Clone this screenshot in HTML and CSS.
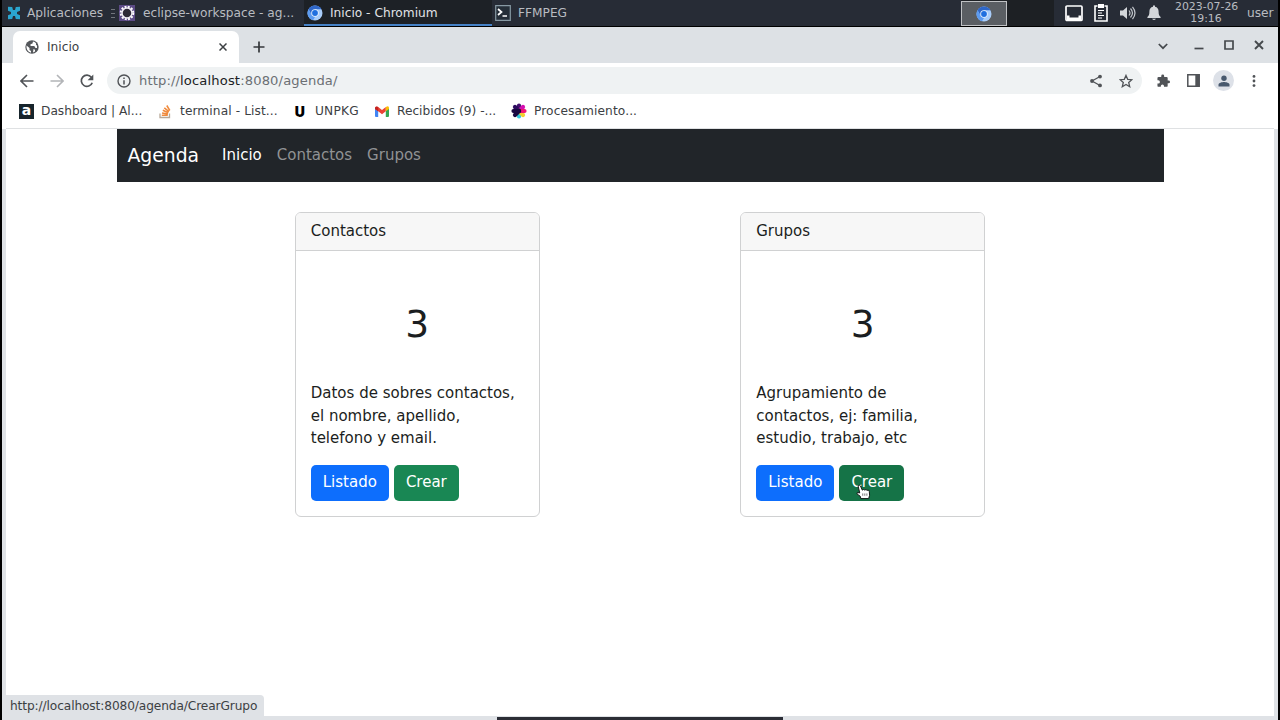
FILE: index.html
```html
<!DOCTYPE html>
<html lang="es">
<head>
    <meta charset="UTF-8">
    <title>Inicio</title>
    <link rel="stylesheet" href="styles.css">
</head>
<body>
    <div class="panel">
        <div class="task task-menu">
            <svg width="14" height="14" viewBox="0 0 14 14" fill="#2aa5cf"><path d="M1 .8l4.200.2L6 4h2l.8-3L13 .8v4L10 6v2l3 1.200v4l-4.200-.2L8 10H6l-.8 3-4.200.2v-4L4 8V6L1 4.800z"/><path d="M0 6h4v2H0zM10 6h4v2h-4z" fill="#272c36"/></svg>
            <span>Aplicaciones</span>
        </div>
        <div class="handle"></div>
        <div class="task task-eclipse">
            <svg width="16" height="16" viewBox="0 0 16 16"><path fill="#5c4b86" d="M0 0h16v16H0z"/><circle cx="8" cy="8" r="6.300" fill="none" stroke="#fff" stroke-width="2" stroke-dasharray="2 1.300"/><circle cx="8" cy="8" r="5" fill="#2d2a36" stroke="#f1edf5" stroke-width="1.500"/></svg>
            <span>eclipse-workspace - ag...</span>
        </div>
        <div class="task task-chromium active">
            <svg width="16" height="16" viewBox="0 0 16 16"><circle cx="8" cy="8" r="7.500" fill="#a9cdfa"/><path d="M1.500 4.300A7.500 7.500 0 0 1 14.500 4.300H8L4.700 10z" fill="#2f67c8"/><path d="M1.500 4.300L5 10.500 8 12l-2 3.300A7.500 7.500 0 0 1 1.500 4.300z" fill="#5c9bf0"/><circle cx="8" cy="8" r="3.800" fill="#e3effd"/><circle cx="8" cy="8" r="2.900" fill="#1f6fdf"/></svg>
            <span>Inicio - Chromium</span>
        </div>
        <div class="task task-term">
            <svg width="16" height="16" viewBox="0 0 16 16"><path d="M.7.7h14.600v14.600H.7z" fill="#252e38" stroke="#8799a3" stroke-width="1.200"/><path d="M3 4l3.500 3L3 10M7.500 11H12" fill="none" stroke="#fff" stroke-width="1.700"/></svg>
            <span>FFMPEG</span>
        </div>
        <div class="pager">
            <div class="desk">
                <svg width="16" height="16" viewBox="0 0 16 16"><circle cx="8" cy="8" r="7.500" fill="#a9cdfa"/><path d="M1.500 4.300A7.500 7.500 0 0 1 14.500 4.300H8L4.700 10z" fill="#2f67c8"/><path d="M1.500 4.300L5 10.500 8 12l-2 3.300A7.500 7.500 0 0 1 1.500 4.300z" fill="#5c9bf0"/><circle cx="8" cy="8" r="3.800" fill="#e3effd"/><circle cx="8" cy="8" r="2.900" fill="#1f6fdf"/></svg>
            </div>
        </div>
        <div class="tray">
            <svg width="18" height="17" viewBox="0 0 18 17"><rect x="1" y="1" width="16" height="14.500" rx="1" fill="none" stroke="#fff" stroke-width="1.700"/><path d="M2 10.500h2.500v2h9v-2H16V15H2z" fill="#fff"/></svg>
            <svg width="14" height="18" viewBox="0 0 14 18"><path d="M3.500 2H1v15h12V2h-2.500" fill="none" stroke="#fff" stroke-width="1.600"/><path d="M4 0h6v4H4z" fill="#fff"/><path d="M4 6.500h6M4 9h4M4 11.500h6M4 14h4" stroke="#fff" stroke-width="1.200"/></svg>
            <svg width="17" height="14" viewBox="0 0 17 14"><path d="M1 4.500h3L8 1v12L4 9.500H1z" fill="#d3d6da"/><path d="M10 4.500q2 2.500 0 5M11.500 2.500q4 4.500 0 9M13.500.8q5 6.200 0 12.400" fill="none" stroke="#c3c7cc" stroke-width="1.200"/></svg>
            <svg width="14" height="16" viewBox="0 0 14 16" fill="#d3d6da"><path d="M6 .5h2v1.200c2.500.5 3.600 2.300 3.600 4.800 0 3 .5 4.300 2 5.500v1H.4v-1c1.500-1.200 2-2.500 2-5.500 0-2.500 1.100-4.300 3.600-4.800zM5 13.800h4q-2 2.600-4 0z"/></svg>
        </div>
        <div class="clock">2023-07-26<br>19:16</div>
        <div class="user">user</div>
    </div>

    <div class="window">
        <div class="tabstrip">
            <div class="tab">
                <svg class="globe" width="14" height="14" viewBox="0 0 14 14"><circle cx="7" cy="7" r="6.700" fill="#54575b"/><path d="M1.500 5.500l3 2.500v2l1.500 1v1.800Q1 11.500 1.500 5.500zM8 1.500l-.5 2-2 .8v1.800h3.800L10.500 8H12V5.500l-1-.6V3.200q-1.300-1.400-3-1.700zM8.500 9l1.500.8v1.700l-2 1z" fill="#fff"/></svg>
                <span>Inicio</span>
                <svg class="close" width="8" height="8" viewBox="0 0 8 8"><path d="M.5.5l7 7M7.500.5l-7 7" stroke="#3c4043" stroke-width="1.500"/></svg>
            </div>
            <svg class="newtab" width="12" height="12" viewBox="0 0 12 12"><path d="M6 .5v11M.5 6h11" stroke="#34373b" stroke-width="1.700"/></svg>
            <div class="controls">
                <svg width="10" height="8" viewBox="0 0 10 8"><path d="M.8 2L5 6.200 9.200 2" fill="none" stroke="#45494d" stroke-width="1.700"/></svg>
                <svg width="10" height="10" viewBox="0 0 10 10"><path d="M.5 8.500h9" stroke="#45494d" stroke-width="1.700"/></svg>
                <svg width="10" height="10" viewBox="0 0 10 10"><path d="M1 1h8v8H1z" fill="none" stroke="#45494d" stroke-width="1.700"/></svg>
                <svg width="10" height="10" viewBox="0 0 10 10"><path d="M1 1l8 8M9 1L1 9" stroke="#45494d" stroke-width="1.900"/></svg>
            </div>
        </div>

        <div class="toolbar">
            <svg width="14" height="14" viewBox="0 0 14 14" fill="none" stroke="#505357" stroke-width="1.600"><path d="M13.500 7H1.300M7 1L1 7l6 6"/></svg>
            <svg width="14" height="14" viewBox="0 0 14 14" fill="none" stroke="#b3b5b8" stroke-width="1.600"><path d="M.5 7h12.200M7 1l6 6-6 6"/></svg>
            <svg width="14" height="14" viewBox="0 0 14 14"><path d="M12.200 8.700A5.600 5.600 0 1 1 11.300 3.300L12 4" fill="none" stroke="#505357" stroke-width="1.700"/><path d="M13.300.5v5.700H7.600z" fill="#505357"/></svg>
            <div class="address">
                <svg width="14" height="14" viewBox="0 0 14 14"><circle cx="7" cy="7" r="6" fill="none" stroke="#505357" stroke-width="1.400"/><path d="M7 6.200v4.300M7 3.400v1.500" stroke="#505357" stroke-width="1.500"/></svg>
                <div class="url">http://<b>localhost</b>:8080/agenda/</div>
                <svg width="14" height="14" viewBox="0 0 14 14" fill="#505357"><path d="M11 2.500L3 7l8 4.500" fill="none" stroke="#505357" stroke-width="1.300"/><circle cx="11" cy="2.600" r="1.900"/><circle cx="3" cy="7" r="1.900"/><circle cx="11" cy="11.400" r="1.900"/></svg>
                <svg width="14" height="14" viewBox="0 0 14 14"><path d="M7 1.400l1.700 3.900 4.200.4-3.200 2.800 1 4.200L7 10.500l-3.700 2.200 1-4.200L1.100 5.700l4.200-.4z" fill="none" stroke="#505357" stroke-width="1.300"/></svg>
            </div>
            <div class="actions">
                <svg width="14" height="14" viewBox="0 0 24 24" fill="#505357"><path d="M21.500 11H20V7a2 2 0 0 0-2-2h-4V3.500a2.500 2.500 0 0 0-5 0V5H4.500a2 2 0 0 0-2 2v3.800H4a2.700 2.700 0 0 1 0 5.400H2.500V20a2 2 0 0 0 2 2h3.800v-1.500a2.700 2.700 0 0 1 5.400 0V22H18a2 2 0 0 0 2-2v-4h1.500a2.500 2.500 0 0 0 0-5z"/></svg>
                <svg width="13" height="13" viewBox="0 0 13 13"><path d="M.8.8h11.400v11.400H.8z" fill="none" stroke="#505357" stroke-width="1.500"/><path d="M8.300 1h4v11h-4z" fill="#505357"/></svg>
                <div class="avatar">
                    <svg width="12" height="12" viewBox="0 0 12 12" fill="#48596e"><circle cx="6" cy="3.200" r="2.700"/><path d="M.5 11.500V9.800C.5 7.800 4 7 6 7s5.500.8 5.500 2.800v1.700z"/></svg>
                </div>
                <svg width="4" height="14" viewBox="0 0 4 14" fill="#505357"><circle cx="2" cy="2.400" r="1.400"/><circle cx="2" cy="7" r="1.400"/><circle cx="2" cy="11.600" r="1.400"/></svg>
            </div>
        </div>

        <div class="bookmarks">
            <div class="bookmark bm-dash"><span class="fav-a">a</span><span>Dashboard | Al...</span></div>
            <div class="bookmark bm-term">
                <svg width="13" height="15" viewBox="0 0 13 15" fill="none"><path d="M1 9.500v4h9.500v-4" stroke="#b7a898" stroke-width="1.300"/><path d="M2.800 11.300h6M3 9l6 .9M3.800 6.300l5.600 2.500M5.300 3.800l4.700 3.900M7.800 1.500l3 5" stroke="#f08a3c" stroke-width="1.500"/></svg>
                <span>terminal - List...</span>
            </div>
            <div class="bookmark bm-unpkg"><span class="fav-u">U</span><span>UNPKG</span></div>
            <div class="bookmark bm-mail">
                <svg width="14" height="11" viewBox="0 0 14 11"><path d="M0 2v8q0 1 1 1h2.200V4z" fill="#4285f4"/><path d="M14 2v8q0 1-1 1h-2.200V4z" fill="#34a853"/><path d="M0 2l1.300-1.300L3.200 1 7 3.900 10.800 1v4.300L7 8.200 3.200 5.300 0 3z" fill="#ea4335"/><path d="M10.800 1q3.200-1.800 3.200 1v1l-3.200 2.300z" fill="#fbbc04"/><path d="M0 2q0-2 2-1.500L3.200 1v4.300L0 3z" fill="#c5221f"/></svg>
                <span>Recibidos (9) -...</span>
            </div>
            <div class="bookmark bm-proc">
                <svg width="16" height="16" viewBox="0 0 16 16" stroke-width="4.200" stroke-linecap="round"><path d="M8 8V2.500" stroke="#43106f"/><path d="M8 8l4-4" stroke="#d40fb0"/><path d="M8 8L4 4" stroke="#2b0b5e"/><path d="M8 8v5.500" stroke="#33c9dc"/><path d="M8 8l4 4" stroke="#f3cf2e"/><path d="M8 8h5.500" stroke="#ee1474"/><path d="M8 8l-4 4" stroke="#190741"/><path d="M8 8H2.500" stroke="#190741"/></svg>
                <span>Procesamiento...</span>
            </div>
        </div>

        <div class="page">
            <nav class="navbar">
                <span class="brand">Agenda</span>
                <span class="nav-link current">Inicio</span>
                <span class="nav-link">Contactos</span>
                <span class="nav-link">Grupos</span>
            </nav>
            <div class="cards">
                <div class="card">
                    <div class="card-header">Contactos</div>
                    <div class="card-body">
                        <div class="count">3</div>
                        <p>Datos de sobres contactos,<br>el nombre, apellido,<br>telefono y email.</p>
                        <div class="buttons">
                            <span class="btn btn-primary">Listado</span>
                            <span class="btn btn-success">Crear</span>
                        </div>
                    </div>
                </div>
                <div class="card">
                    <div class="card-header">Grupos</div>
                    <div class="card-body">
                        <div class="count">3</div>
                        <p>Agrupamiento de<br>contactos, ej: familia,<br>estudio, trabajo, etc</p>
                        <div class="buttons">
                            <span class="btn btn-primary">Listado</span>
                            <span class="btn btn-success hovered">Crear
                                <svg class="cursor" width="15" height="16" viewBox="0 0 16 17"><path d="M2.200 2Q3.500.5 4.700 2l2 4.500 1.300-.7 1.200.6 1.500-.5 1 .8 1.700-.2.8 1.500.3 4-1 3.500H5.200L4.500 13 1 10.500 1.500 9l2.500.5z" fill="#fff" stroke="#111" stroke-width="1"/><path d="M7.200 10v2.500M9.400 10v2.500M11.600 10v2.500" stroke="#333" stroke-width=".7"/></svg>
                            </span>
                        </div>
                    </div>
                </div>
            </div>
        </div>
        <div class="status">http://localhost:8080/agenda/CrearGrupo</div>
        <div class="dock"></div>
    </div>
</body>
</html>
```
FILE: styles.css
```css
* {
    box-sizing: border-box;
}

body {
    margin: 0;
    width: 1280px;
    height: 720px;
    overflow: hidden;
    background: #000;
    font-family: "DejaVu Sans", sans-serif;
    font-size: 12.2px;
    color: #3c4043;
    white-space: nowrap;
}

svg {
    display: block;
    flex: none;
}

/* desktop panel */
.panel {
    display: flex;
    align-items: center;
    height: 26px;
    margin: 0 2px;
    background: #272c36;
    color: #b9bcc1;
}

.task {
    display: flex;
    align-items: center;
    height: 26px;
    gap: 8px;
    flex: none;
}

.task-menu {
    width: 109px;
    padding-left: 5px;
    gap: 6px;
}

.handle {
    width: 4px;
    height: 9px;
    margin-right: 3px;
    flex: none;
    background: repeating-linear-gradient(#71757c 0 1px, transparent 1px 4px);
}

.task-eclipse {
    width: 186px;
    padding-left: 1px;
}

.task-chromium {
    width: 188px;
    padding-left: 3px;
    gap: 7px;
}

.task.active {
    background: #1d2126;
    color: #e1e3e6;
    border-bottom: 2px solid #4581c6;
    padding-top: 2px;
}

.task-term {
    padding-left: 3px;
    gap: 7px;
    width: 469px;
}

.pager {
    width: 93px;
    height: 26px;
    flex: none;
    background: #1d2024;
}

.desk {
    display: grid;
    place-items: center;
    width: 46px;
    height: 25px;
    margin-top: 1px;
    background: #5a5e63;
    border: 1px solid #bfc1c4;
}

.tray {
    display: flex;
    align-items: center;
    gap: 11px;
    width: 121px;
    padding-left: 11px;
    flex: none;
}

.clock {
    width: 62px;
    flex: none;
    font-size: 10.900px;
    line-height: 12px;
    text-align: center;
}

.user {
    margin-left: 10px;
}

/* browser window */
.window {
    position: relative;
    display: flex;
    flex-direction: column;
    height: 693px;
    margin: 1px 2px 0;
    background: #fff;
}

.tabstrip {
    display: flex;
    align-items: center;
    height: 36px;
    background: #dde1e5;
}

.tab {
    display: flex;
    align-items: center;
    align-self: flex-end;
    width: 226px;
    height: 32px;
    margin-left: 11px;
    padding: 0 12px 1px 12px;
    border-radius: 7px 7px 0 0;
    background: #fff;
}

.globe {
    margin-right: 8px;
}

.close {
    margin-left: auto;
}

.newtab {
    margin: 4px 0 0 14px;
}

.controls {
    display: flex;
    align-items: center;
    gap: 20px;
    margin-left: auto;
    padding-right: 14px;
}

.controls svg:first-child {
    margin: 2px 6px 0 0;
}

.toolbar {
    display: flex;
    align-items: center;
    height: 35px;
    padding-left: 18px;
    gap: 16px;
    margin: 0 4px 0 0;
}

.address {
    display: flex;
    align-items: center;
    width: 1035px;
    height: 27px;
    flex: none;
    margin-left: -3px;
    padding: 0 9px 0 10px;
    gap: 16px;
    border-radius: 14px;
    background: #eff2f3;
}

.url {
    flex: 1;
    margin-left: -8px;
    font-size: 13.100px;
    letter-spacing: 0.14px;
    color: #6b6f73;
}

.url b {
    font-weight: normal;
    color: #202124;
}

.actions {
    display: flex;
    align-items: center;
    gap: 17px;
    margin-left: -2px;
}

.avatar {
    display: grid;
    place-items: center;
    width: 21px;
    height: 21px;
    border-radius: 50%;
    background: #dde1e8;
    margin: 0 1px 0 -4px;
}

.bookmarks {
    display: flex;
    align-items: center;
    height: 31px;
    margin: 0 4px;
    padding: 0 0 4px 13px;
    border-bottom: 1px solid #dfe1e3;
}

.bookmark {
    display: flex;
    align-items: center;
    gap: 7px;
    height: 26px;
    flex: none;
}

.bm-dash { width: 140px; }
.bm-term { width: 134px; gap: 8px; letter-spacing: 0.1px; }
.bm-unpkg { width: 82px; gap: 8px; letter-spacing: 0.2px; }
.bm-mail { width: 136px; gap: 8px; }
.bm-proc { letter-spacing: 0.1px; }

.fav-a {
    width: 15px;
    height: 15px;
    background: #17242b;
    color: #fff;
    font-weight: bold;
    font-size: 14px;
    line-height: 13px;
    text-align: center;
}

.fav-u {
    width: 14px;
    color: #000;
    font: 900 14px Inter, sans-serif;
    text-align: center;
}

/* web page */
.page {
    flex: 1;
    border: solid #dfe2e6;
    border-width: 0 4px;
    border-bottom: 4px solid #dfe2e6;
    font-size: 15px;
    line-height: 22.500px;
    color: #1b1e21;
}

.navbar {
    display: flex;
    align-items: center;
    width: 1047px;
    height: 53px;
    margin: 0 auto;
    padding-left: 11px;
    background: #212529;
}

.brand {
    margin: 2px 23px 0 0;
    font-size: 18.750px;
    color: #fff;
}

.nav-link {
    margin-right: 15px;
    color: #909294;
}

.nav-link.current {
    color: #fff;
}

.cards {
    display: grid;
    grid-template-columns: 1fr 1fr;
    justify-items: center;
    width: 891px;
    margin: 30px auto 0;
}

.card {
    width: 245px;
    height: 305px;
    border: 1px solid #d0d1d2;
    border-radius: 6px;
    overflow: hidden;
}

.card-header {
    height: 38px;
    padding: 7px 15px;
    border-bottom: 1px solid #d0d1d2;
    background: #f7f7f7;
}

.card-body {
    padding: 51px 15px 0;
}

.count {
    font-size: 37.500px;
    line-height: 45px;
    text-align: center;
}

.card p {
    margin: 35px 0 15px;
}

.buttons {
    display: flex;
    gap: 5px;
}

.btn {
    position: relative;
    height: 36px;
    padding: 6.500px 12px;
    border-radius: 5px;
    color: #fff;
}

.btn-primary {
    background: #0d6efd;
}

.btn-success {
    background: #198754;
}

.btn-success.hovered {
    background: #157347;
}

/* mouse pointer over the button */
.cursor {
    position: absolute;
    left: 17px;
    top: 19px;
}

/* link preview bubble, over the page corner */
.status {
    position: absolute;
    left: 2px;
    bottom: 0;
    width: 260px;
    height: 25px;
    padding-left: 6px;
    line-height: 22px;
    letter-spacing: -0.11px;
    border-radius: 0 4px 0 0;
    background: #dfe2e6;
}

.dock {
    position: absolute;
    left: 495px;
    bottom: 0;
    width: 286px;
    height: 3px;
    background: #2b2d35;
}
```
